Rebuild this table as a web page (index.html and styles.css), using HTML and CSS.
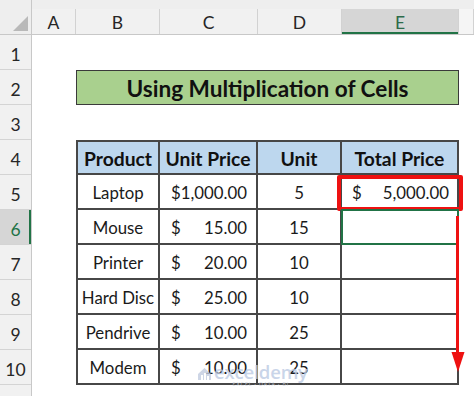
FILE: index.html
```html
<!DOCTYPE html>
<html>
<head>
<meta charset="utf-8">
<link rel="stylesheet" href="styles.css">
</head>
<body>
<div class="sheet">
  <div class="corner"><span class="tri"></span></div>
  <div class="colheads">
    <div class="ch w-a">A</div>
    <div class="ch w-b">B</div>
    <div class="ch w-c">C</div>
    <div class="ch w-d">D</div>
    <div class="ch w-e on">E</div>
    <div class="ch w-f"></div>
  </div>
  <div class="rowheads">
    <div class="rh">1</div>
    <div class="rh">2</div>
    <div class="rh">3</div>
    <div class="rh">4</div>
    <div class="rh">5</div>
    <div class="rh on">6</div>
    <div class="rh">7</div>
    <div class="rh">8</div>
    <div class="rh">9</div>
    <div class="rh">10</div>
    <div class="rh"></div>
  </div>
  <div class="cells">
    <div class="title">Using Multiplication of Cells</div>
    <div class="table">
      <div class="td th first">Product</div>
      <div class="td th">Unit Price</div>
      <div class="td th">Unit</div>
      <div class="td th">Total Price</div>

      <div class="td first">Laptop</div>
      <div class="td money"><span>$1,000.00</span></div>
      <div class="td">5</div>
      <div class="td money e"><span>$</span><span>5,000.00</span><div class="callout"></div></div>

      <div class="td first">Mouse</div>
      <div class="td money"><span>$</span><span>15.00</span></div>
      <div class="td">15</div>
      <div class="td"><div class="selection"></div></div>

      <div class="td first">Printer</div>
      <div class="td money"><span>$</span><span>20.00</span></div>
      <div class="td">10</div>
      <div class="td"></div>

      <div class="td first">Hard Disc</div>
      <div class="td money"><span>$</span><span>25.00</span></div>
      <div class="td">10</div>
      <div class="td"></div>

      <div class="td first">Pendrive</div>
      <div class="td money"><span>$</span><span>10.00</span></div>
      <div class="td">25</div>
      <div class="td"></div>

      <div class="td first">Modem</div>
      <div class="td money"><span>$</span><span>10.00</span></div>
      <div class="td">25</div>
      <div class="td"></div>
    </div>
  </div>

  <svg class="arrow" width="16" height="158" viewBox="0 0 16 158">
    <rect x="6" y="0" width="3" height="140" fill="#ee1111"/>
    <polygon points="1.5,136 14.5,136 8,156" fill="#ee1111"/>
  </svg>

  <div class="watermark">
    <svg class="wm-icon" width="15" height="14" viewBox="0 0 15 14">
      <path d="M1 7 L7.5 1 L14 7 L14 13 L1 13 Z" fill="#c3cde0"/>
      <rect x="4" y="8" width="2" height="5" fill="#ffffff"/>
      <rect x="7" y="6" width="2" height="7" fill="#ffffff"/>
      <rect x="10" y="9" width="2" height="4" fill="#ffffff"/>
    </svg>
    <div class="wm-text">
      <span class="wm-name">exceldemy</span>
      <span class="wm-sub">EXCEL · DATA · BI</span>
    </div>
  </div>
</div>
</body>
</html>
```
FILE: styles.css
```css
html, body {
  margin: 0;
  padding: 0;
}
body {
  width: 474px;
  height: 396px;
  overflow: hidden;
  background: #ffffff;
  font-family: Lato, "Liberation Sans", sans-serif;
  color: #1a1a1a;
}
.sheet {
  position: relative;
  display: grid;
  grid-template-columns: 32px 1fr;
  grid-template-rows: 35px 1fr;
  height: 396px;
}
.corner {
  background: #eeeeee;
  border-right: 1px solid #c8c8c8;
  border-bottom: 1px solid #c8c8c8;
  box-sizing: border-box;
  display: flex;
  justify-content: flex-end;
  align-items: flex-end;
  padding: 0 3px 3px 0;
}
.tri {
  width: 0;
  height: 0;
  border-left: 15px solid transparent;
  border-bottom: 15px solid #b9b9b9;
}
.colheads {
  display: flex;
  background: #eeeeee;
  padding-top: 9px;
  box-sizing: border-box;
  border-bottom: 1px solid #c8c8c8;
}
.ch {
  flex: none;
  box-sizing: border-box;
  border-right: 1px solid #d2d2d2;
  display: flex;
  align-items: center;
  justify-content: center;
  padding-top: 2px;
  font-size: 17.5px;
  color: #262626;
  background: #f1f1f1;
}
.w-a { width: 44px; }
.w-b { width: 84px; }
.w-c { width: 98px; }
.w-d { width: 84px; }
.w-e { width: 117px; }
.w-f { flex: 1; background: #f5f5f5; }
.ch.on {
  background: #d6d6d6;
  color: #2d6b4a;
  box-shadow: inset 0 -2px 0 #217346;
}
.rowheads {
  display: flex;
  flex-direction: column;
  background: #eeeeee;
  border-right: 1px solid #c8c8c8;
  overflow: hidden;
}
.rh {
  flex: none;
  height: 35px;
  box-sizing: border-box;
  border-bottom: 1px solid #d4d4d4;
  display: flex;
  align-items: center;
  justify-content: center;
  padding-top: 5px;
  font-size: 17.5px;
  color: #262626;
  background: #f1f1f1;
}
.rh.on {
  background: #d6d6d6;
  color: #217346;
  box-shadow: inset -2px 0 0 #217346;
}
.cells {
  display: flex;
  flex-direction: column;
  align-items: flex-start;
  padding-left: 44px;
}
.title {
  margin-top: 35px;
  width: 383px;
  height: 35px;
  box-sizing: border-box;
  background: #a9d08e;
  border: 1px solid #3a3a3a;
  display: flex;
  align-items: center;
  justify-content: center;
  padding-top: 2px;
  font-weight: 700;
  font-size: 22.6px;
  color: #111111;
}
.table {
  margin-top: 35px;
  display: grid;
  grid-template-columns: 84px 98px 84px 117px;
  grid-auto-rows: 35px;
}
.td {
  position: relative;
  box-sizing: border-box;
  border-right: 2px solid #474747;
  border-bottom: 2px solid #474747;
  display: flex;
  align-items: center;
  justify-content: center;
  padding-top: 2px;
  font-size: 16.8px;
  color: #1a1a1a;
}
.td.first {
  border-left: 2px solid #474747;
}
.td.th {
  border-top: 2px solid #474747;
  background: #bdd7ee;
  font-weight: 700;
  font-size: 19.3px;
  color: #111111;
}
.td.money {
  justify-content: space-between;
  padding-left: 11px;
  padding-right: 9px;
}
.td.money.e {
  padding-left: 10px;
  padding-right: 8px;
}
.callout {
  position: absolute;
  left: -5px;
  right: -6px;
  top: 0;
  bottom: -3px;
  border: 4px solid #ee1111;
  border-radius: 2px;
}
.selection {
  position: absolute;
  left: -1px;
  right: -2px;
  top: -1px;
  bottom: -2px;
  border: 2px solid #217346;
}
.arrow {
  position: absolute;
  left: 450px;
  top: 216px;
}
.watermark {
  position: absolute;
  left: 197px;
  top: 363px;
  display: flex;
  align-items: flex-start;
  gap: 2px;
  opacity: 0.8;
}
.wm-icon {
  margin-top: 4px;
}
.wm-text {
  display: flex;
  flex-direction: column;
  align-items: center;
  line-height: 1;
}
.wm-name {
  font-family: "Open Sans", sans-serif;
  font-size: 18.5px;
  font-weight: 600;
  color: #bccbe4;
  letter-spacing: -0.2px;
}
.wm-sub {
  font-size: 5px;
  color: #c9d0dc;
  letter-spacing: 1px;
}
```
